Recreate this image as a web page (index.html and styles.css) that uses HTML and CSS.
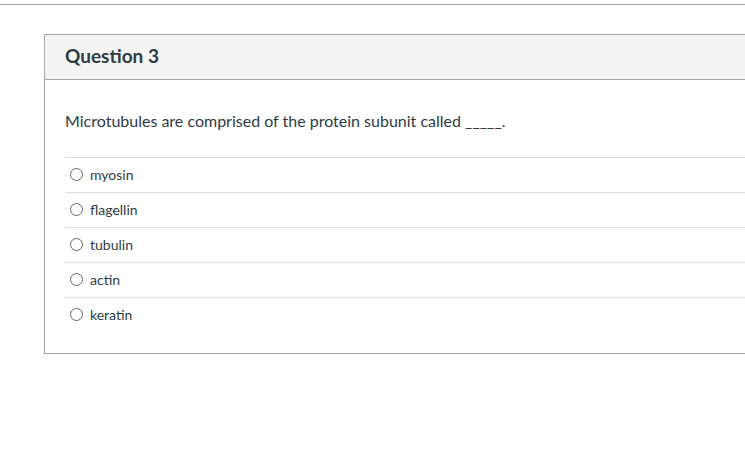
FILE: index.html
```html
<!DOCTYPE html>
<html>
<head>
<meta charset="utf-8">
<link rel="stylesheet" href="styles.css">
</head>
<body>
<div class="topbar"></div>
<div class="card">
  <div class="card-header">
    <h2 class="title">Question 3</h2>
  </div>
  <div class="card-body">
    <p class="question">Microtubules are comprised of the protein subunit called _____.</p>
    <div class="answers">
      <label class="answer"><span class="radio"></span><span class="label">myosin</span></label>
      <label class="answer"><span class="radio"></span><span class="label">flagellin</span></label>
      <label class="answer"><span class="radio"></span><span class="label">tubulin</span></label>
      <label class="answer"><span class="radio"></span><span class="label">actin</span></label>
      <label class="answer"><span class="radio"></span><span class="label">keratin</span></label>
    </div>
  </div>
</div>
</body>
</html>
```
FILE: styles.css
```css
html, body {
  margin: 0;
  padding: 0;
  background: #fff;
  font-family: Lato, "Liberation Sans", sans-serif;
  color: #2d3b45;
  overflow: hidden;
}
.topbar {
  margin-top: 4px;
  height: 1px;
  background: #a5a5a5;
}
.card {
  margin: 29px 0 0 44px;
  border: 1px solid #a5a5a5;
  border-right: none;
}
.card-header {
  background: #f4f4f4;
  border-bottom: 1px solid #a5a5a5;
  height: 41px;
  padding-bottom: 3px;
  display: flex;
  align-items: center;
  padding-left: 20px;
}
.title {
  margin: 0;
  font-size: 19px;
  font-weight: 700;
  color: #2d3b45;
}
.card-body {
  padding: 31px 0 21px 20px;
}
.question {
  margin: 0;
  font-size: 16px;
  line-height: 20px;
  color: #2d3b45;
}
.answers {
  margin-top: 26px;
  border-top: 1px solid #dcdcdc;
}
.answer {
  display: flex;
  align-items: center;
  height: 33px;
  padding-bottom: 1px;
  border-bottom: 1px solid #dcdcdc;
  padding-left: 5px;
}
.answer:last-child {
  border-bottom: none;
}
.radio {
  width: 11px;
  height: 11px;
  border: 1px solid #666;
  border-radius: 50%;
  margin-right: 7px;
  flex: none;
}
.label {
  font-size: 14px;
  color: #2d3b45;
}
```
